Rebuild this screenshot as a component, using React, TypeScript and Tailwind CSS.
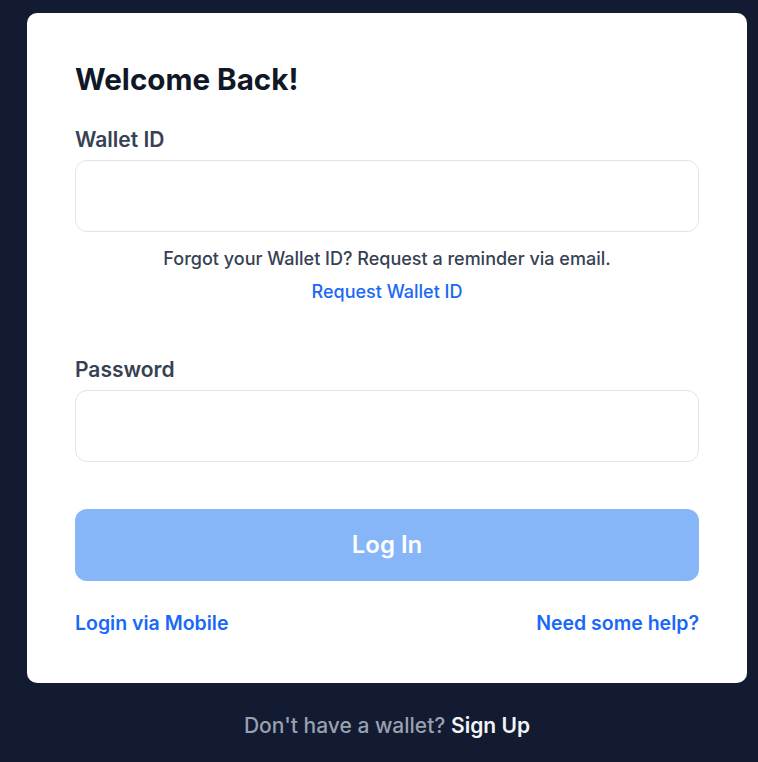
export default function App() {
  return (
    <div
      className="min-h-screen bg-[#121b32] pl-[27px] pt-[13px] pb-8"
      style={{ fontFamily: 'Inter, "Noto Sans", sans-serif' }}
    >
      <div className="w-[720px]">
        {/* Card */}
        <div className="rounded-[10px] bg-white px-12 pt-12 pb-[46px]">
          <h1 className="text-[29.6px] font-bold leading-9 text-gray-900">Welcome Back!</h1>

          <div className="mt-[29px]">
            <label className="block text-[21px] font-semibold leading-7 text-gray-700">Wallet ID</label>
            <input
              type="text"
              className="mt-[6px] block h-[72px] w-full rounded-xl border border-[#e2e2ee] bg-white px-4 text-lg outline-none"
            />
          </div>

          <p className="mt-[13px] text-center text-lg font-medium leading-7 text-gray-700">
            Forgot your Wallet ID? Request a reminder via email.
          </p>
          <p className="mt-[5px] text-center leading-7">
            <a href="#" className="text-lg font-medium text-[#1a68f6]">
              Request Wallet ID
            </a>
          </p>

          <div className="mt-[50px]">
            <label className="block text-[21px] font-semibold leading-7 text-gray-700">Password</label>
            <input
              type="password"
              className="mt-[6px] block h-[72px] w-full rounded-xl border border-[#e2e2ee] bg-white px-4 text-lg outline-none"
            />
          </div>

          <button
            type="button"
            className="mt-[47px] flex h-[72px] w-full items-center justify-center rounded-xl bg-[#86b5f8] text-2xl font-semibold text-white"
          >
            Log In
          </button>

          <div className="mt-[28px] flex items-center justify-between text-[19.5px] font-semibold leading-7 text-[#1a68f6]">
            <a href="#">Login via Mobile</a>
            <a href="#">Need some help?</a>
          </div>
        </div>

        {/* Footer */}
        <p className="mt-[29px] text-center text-[21px] font-medium leading-7 text-gray-400">
          Don't have a wallet? <a href="#" className="font-semibold text-gray-100">Sign Up</a>
        </p>
      </div>
    </div>
  )
}
